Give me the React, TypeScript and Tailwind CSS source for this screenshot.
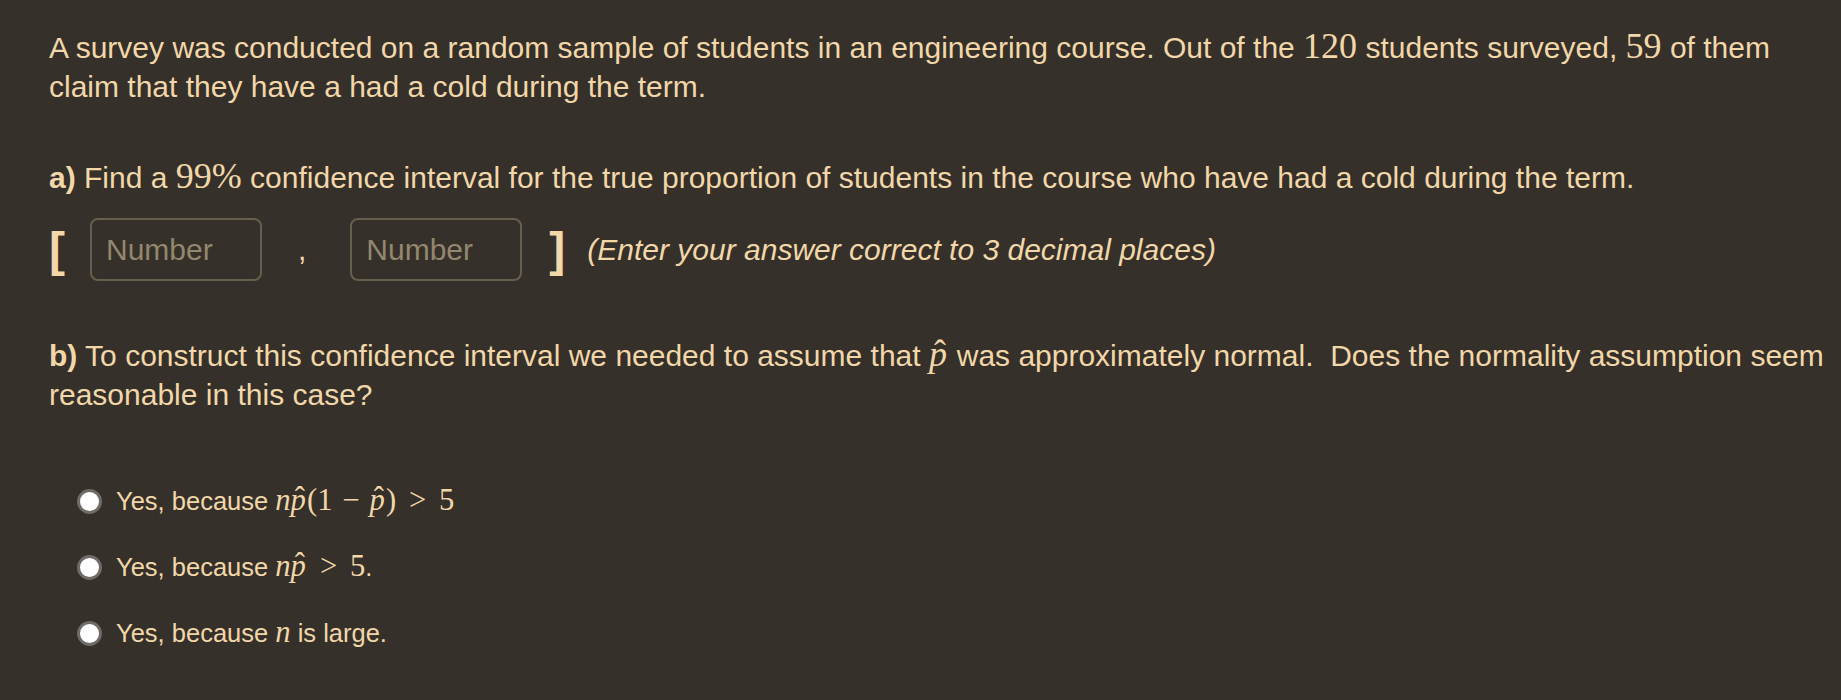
import React from "react";

const serif = "font-['Liberation_Serif','Times_New_Roman',serif]";

const M = ({ children }: { children: React.ReactNode }) => (
  <span className={`${serif} text-[1.2em] leading-none`}>{children}</span>
);

const V = ({ children }: { children: React.ReactNode }) => (
  <i className={`${serif} text-[1.2em] leading-none`}>{children}</i>
);

// p with a hat on top
const PHat = () => (
  <span className={`${serif} relative inline-block pr-[0.04em] text-[1.2em] leading-none italic`}>
    p
    <span className="absolute left-[0.14em] top-[-0.04em] not-italic leading-none">ˆ</span>
  </span>
);

const NumberBox = () => (
  <input
    placeholder="Number"
    className="h-[63px] w-[172px] rounded-lg border-2 border-[#675e4d] bg-transparent px-[14px] text-[30px] text-[#f2d7aa] placeholder:text-[#93876f] outline-none"
  />
);

const Radio = ({ children }: { children: React.ReactNode }) => (
  <label className="flex h-[66px] items-center gap-[14px]">
    <span className="h-[25px] w-[25px] shrink-0 rounded-full border-[3px] border-[#6f6b66] bg-white" />
    <span>{children}</span>
  </label>
);

export default function App() {
  return (
    <div className="min-h-[700px] w-full whitespace-nowrap bg-[#353029] pl-[49px] pt-[28px] font-['Liberation_Sans',Arial,sans-serif] text-[30px] leading-[39px] text-[#f2d7aa]">
      <p>
        A survey was conducted on a random sample of students in an engineering course. Out of the <M>120</M> students surveyed, <M>59</M> of them
        <br />
        claim that they have a had a cold during the term.
      </p>

      <p className="mt-[52px]">
        <b>a)</b> Find a <M>99%</M> confidence interval for the true proportion of students in the course who have had a cold during the term.
      </p>

      <div className="mt-[21px] flex h-[63px] items-center">
        <span className="text-[48px] font-bold leading-none">[</span>
        <span className="ml-[25px]">
          <NumberBox />
        </span>
        <span className="ml-[36px] mr-[44px]">,</span>
        <NumberBox />
        <span className="ml-[27px] text-[48px] font-bold leading-none">]</span>
        <i className="ml-[22px]">(Enter your answer correct to 3 decimal places)</i>
      </div>

      <p className="mt-[55px]">
        <b>b)</b> To construct this confidence interval we needed to assume that <PHat /> was approximately normal.&nbsp; Does the normality assumption seem
        <br />
        reasonable in this case?
      </p>

      <div className="mt-[54px] flex flex-col pl-[28px] text-[25.5px]">
        <Radio>
          Yes, because <V>n</V>
          <PHat />
          <M>(1</M>
          <M>
            <span className="mx-[0.32em]">−</span>
          </M>
          <PHat />
          <M>)</M>
          <M>
            <span className="mx-[0.42em]">&gt;</span>5
          </M>
        </Radio>
        <Radio>
          Yes, because <V>n</V>
          <PHat />
          <M>
            <span className="mx-[0.42em]">&gt;</span>5
          </M>
          .
        </Radio>
        <Radio>
          Yes, because <V>n</V> is large.
        </Radio>
      </div>
    </div>
  );
}
